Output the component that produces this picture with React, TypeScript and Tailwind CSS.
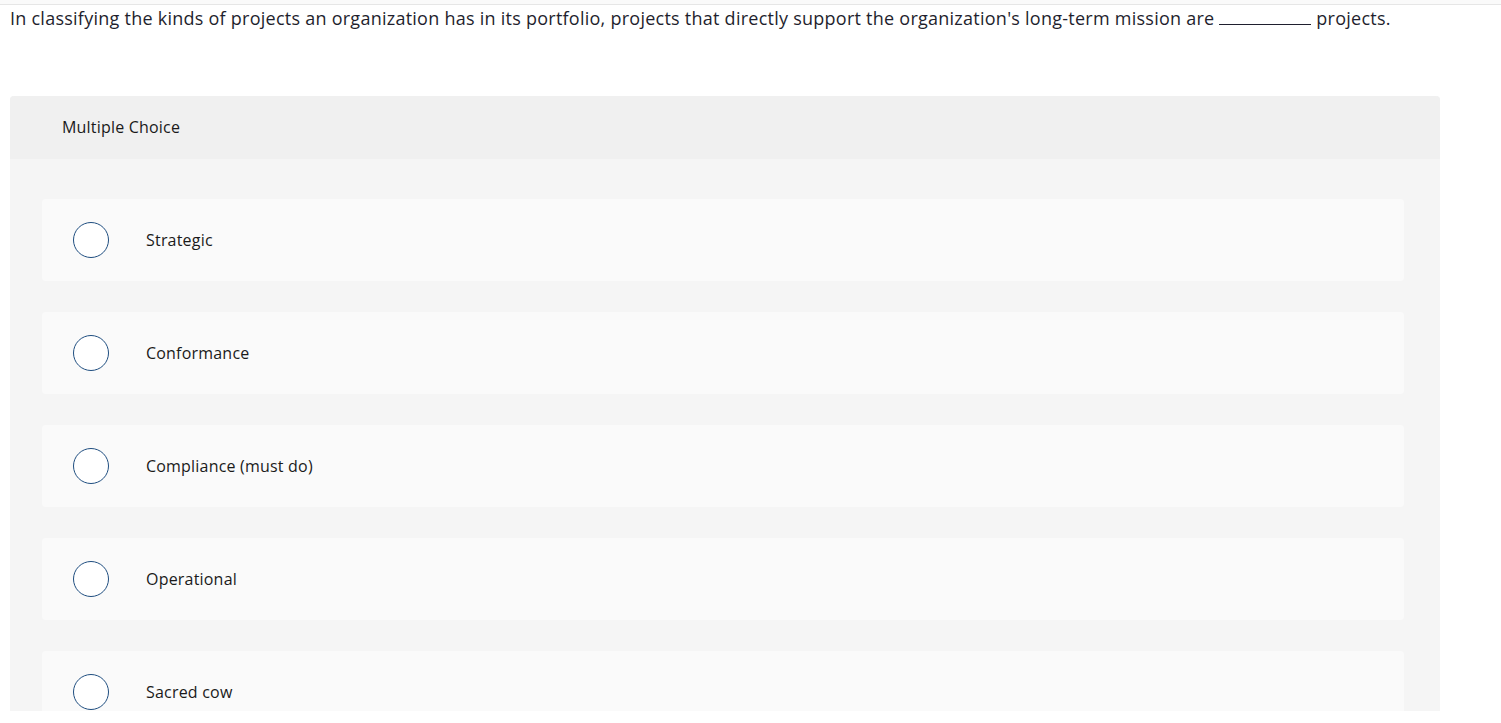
const options = ["Strategic", "Conformance", "Compliance (must do)", "Operational", "Sacred cow"];

function Radio() {
  return (
    <span className="shrink-0 w-9 h-9 rounded-full border-[1.5px] border-[#1f4e80] bg-white" />
  );
}

export default function App() {
  return (
    <div className="h-[711px] overflow-hidden bg-white text-[#1a1a1a] tracking-[0.2px]" style={{ fontFamily: "'Open Sans', Lato, sans-serif" }}>
      <div className="h-[5px] bg-[#fafafa] border-b border-[#e6e6e6]" />

      {/* question */}
      <p className="pl-[10px] text-[18px] leading-[26px] tracking-[0.25px] text-[#1f1f2e]">
        In classifying the kinds of projects an organization has in its portfolio, projects that directly support the organization's long-term mission are{" "}
        <span className="inline-block w-[92px] border-b border-[#1f1f2e] align-baseline" />{" "}
        projects.
      </p>

      {/* answer panel */}
      <div className="ml-[10px] mt-[65px] w-[1430px] rounded-t bg-[#f5f5f5]">
        <div className="h-[63px] flex items-center pl-[52px] pb-[2px] rounded-t bg-[#f0f0f0] text-[16px]">
          Multiple Choice
        </div>
        <div className="flex flex-col gap-[31px] pt-[40px] pl-8 pr-9 pb-8">
          {options.map((o) => (
            <div key={o} className="h-[82px] flex items-center rounded bg-[#fafafa] pl-[31px]">
              <Radio />
              <span className="ml-[37px] text-[16px]">{o}</span>
            </div>
          ))}
        </div>
      </div>
    </div>
  );
}
